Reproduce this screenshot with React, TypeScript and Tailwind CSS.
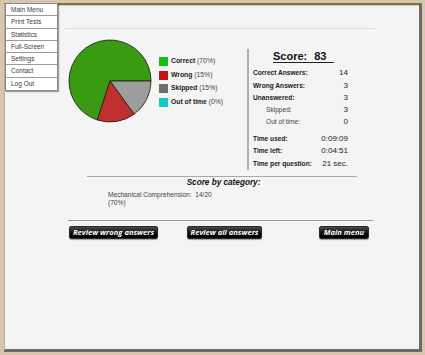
import React from "react";

const menuItems = [
  "Main Menu",
  "Print Tests",
  "Statistics",
  "Full-Screen",
  "Settings",
  "Contact",
  "Log Out",
];

const legend = [
  { label: "Correct", pct: "(70%)", color: "bg-[#12c012]" },
  { label: "Wrong", pct: "(15%)", color: "bg-[#c41212]" },
  { label: "Skipped", pct: "(15%)", color: "bg-[#6e6e6e]" },
  { label: "Out of time", pct: "(0%)", color: "bg-[#14c8c8]" },
];

const answerRows = [
  { label: "Correct Answers:", value: "14", sub: false },
  { label: "Wrong Answers:", value: "3", sub: false },
  { label: "Unanswered:", value: "3", sub: false },
  { label: "Skipped:", value: "3", sub: true },
  { label: "Out of time:", value: "0", sub: true },
];

const timeRows = [
  { label: "Time used:", value: "0:09:09" },
  { label: "Time left:", value: "0:04:51" },
  { label: "Time per question:", value: "21 sec." },
];

function Pie() {
  return (
    <svg width="84" height="84" viewBox="0 0 84 84" className="shrink-0">
      <path
        d="M42 42 L29.33 81 A41 41 0 1 1 83 42 Z"
        fill="#3a9b12"
        stroke="#1c2a12"
        strokeWidth="0.9"
        strokeLinejoin="round"
      />
      <path
        d="M42 42 L83 42 A41 41 0 0 1 66.1 75.17 Z"
        fill="#9d9d9d"
        stroke="#1c2a12"
        strokeWidth="0.9"
        strokeLinejoin="round"
      />
      <path
        d="M42 42 L66.1 75.17 A41 41 0 0 1 29.33 81 Z"
        fill="#c0302e"
        stroke="#1c2a12"
        strokeWidth="0.9"
        strokeLinejoin="round"
      />
    </svg>
  );
}

function Button({ label, width }: { label: string; width: string }) {
  return (
    <div
      className={`${width} h-[13px] rounded-[2px] bg-linear-to-b from-[#4a4a4a] via-[#151515] to-[#000] border border-[#2a2a2a] shadow-[0_1px_1px_rgba(0,0,0,0.35)] text-center text-white font-bold italic text-[7.6px] leading-[11px] font-['Open_Sans',sans-serif] [text-shadow:0_1px_0_#000]`}
    >
      {label}
    </div>
  );
}

export default function App() {
  return (
    <div className="relative w-[425px] h-[355px] overflow-hidden bg-[#d7c5ae] pt-[3px] pl-[4px] font-['Liberation_Sans',Arial,sans-serif]">
      {/* PANEL */}
      <div className="w-[418px] h-[349px] bg-[#f4f4f4] border-t-2 border-t-[#77724f] border-l border-l-[#b5aa98] border-r-[3px] border-r-[#6c6962] border-b-[3px] border-b-[#6c6962] shadow-[inset_0_1px_0_#d8d28c]">
        {/* TOP RULE */}
        <div className="mt-[23px] ml-[60px] w-[310px] h-px bg-[#dedede]"></div>

        {/* RESULTS ROW */}
        <div className="mt-[10px] pl-[63px] flex items-start">
          <Pie />

          <div className="ml-[7px] mt-[18px] w-[88px] flex flex-col gap-[4.5px]">
            {legend.map((l) => (
              <div key={l.label} className="flex items-center gap-[3px] h-[9px]">
                <div className={`w-[9px] h-[9px] ${l.color}`}></div>
                <span className="text-[6.8px] text-[#444]">
                  <span className="font-bold text-[#1a1a1a]">{l.label}</span> {l.pct}
                </span>
              </div>
            ))}
          </div>

          <div className="mt-[10px] h-[121px] w-[2px] bg-[#b0b0b0]"></div>

          <div className="ml-[4px] w-[95px] pt-[11px]">
            <div className="ml-[20px] w-[61px] h-[13px] border-b border-[#222] text-[11px] leading-[12px] font-bold text-[#111]">
              Score:<span className="ml-[7px]">83</span>
            </div>

            <div className="mt-[4px]">
              {answerRows.map((r, i) => (
                <div
                  key={r.label}
                  className={`flex items-center justify-between h-[12px] ${i === 0 ? "mb-[1px]" : ""}`}
                >
                  <span
                    className={
                      r.sub
                        ? "pl-[13px] text-[6.6px] text-[#444]"
                        : "text-[6.6px] font-bold text-[#1a1a1a]"
                    }
                  >
                    {r.label}
                  </span>
                  <span className="text-[8px] text-[#222]">{r.value}</span>
                </div>
              ))}
            </div>

            <div className="mt-[5px]">
              {timeRows.map((r, i) => (
                <div
                  key={r.label}
                  className={`flex items-center justify-between h-[12px] ${i === 1 ? "mb-[1px]" : ""}`}
                >
                  <span className="text-[6.6px] font-bold text-[#1a1a1a]">{r.label}</span>
                  <span className="text-[8px] text-[#222]">{r.value}</span>
                </div>
              ))}
            </div>
          </div>
        </div>

        {/* CATEGORY */}
        <div className="mt-[6px] ml-[82px] w-[270px] h-px bg-[#a9a9a9]"></div>
        <div className="mt-[1px] ml-[82px] w-[273px] text-center text-[8.2px] leading-[10px] font-bold italic text-[#111]">
          Score by category:
        </div>
        <div className="mt-[2.5px] ml-[103px] text-[6.6px] leading-[8.3px] text-[#444]">
          <div>Mechanical Comprehension:&nbsp; 14/20</div>
          <div>(70%)</div>
        </div>

        <div className="mt-[12.5px] ml-[63px] w-[305px] h-[1.5px] bg-[#9a9a9a]"></div>

        {/* BUTTONS */}
        <div className="mt-[5px] ml-[64px] flex">
          <Button label="Review wrong answers" width="w-[89px]" />
          <div className="ml-[29px]">
            <Button label="Review all answers" width="w-[75px]" />
          </div>
          <div className="ml-[57px]">
            <Button label="Main menu" width="w-[50px]" />
          </div>
        </div>
      </div>

      {/* SIDE MENU */}
      <div className="absolute top-[3px] left-[5px] w-[53px] border border-[#8a8a8a] bg-white shadow-[1px_1px_1px_rgba(0,0,0,0.35)]">
        {menuItems.map((m, i) => (
          <div
            key={m}
            className={`h-[12.3px] pl-[5px] text-[6.5px] leading-[11.5px] text-[#3a3a3a] ${i < menuItems.length - 1 ? "border-b border-[#9a9a9a]" : ""}`}
          >
            {m}
          </div>
        ))}
      </div>
    </div>
  );
}
